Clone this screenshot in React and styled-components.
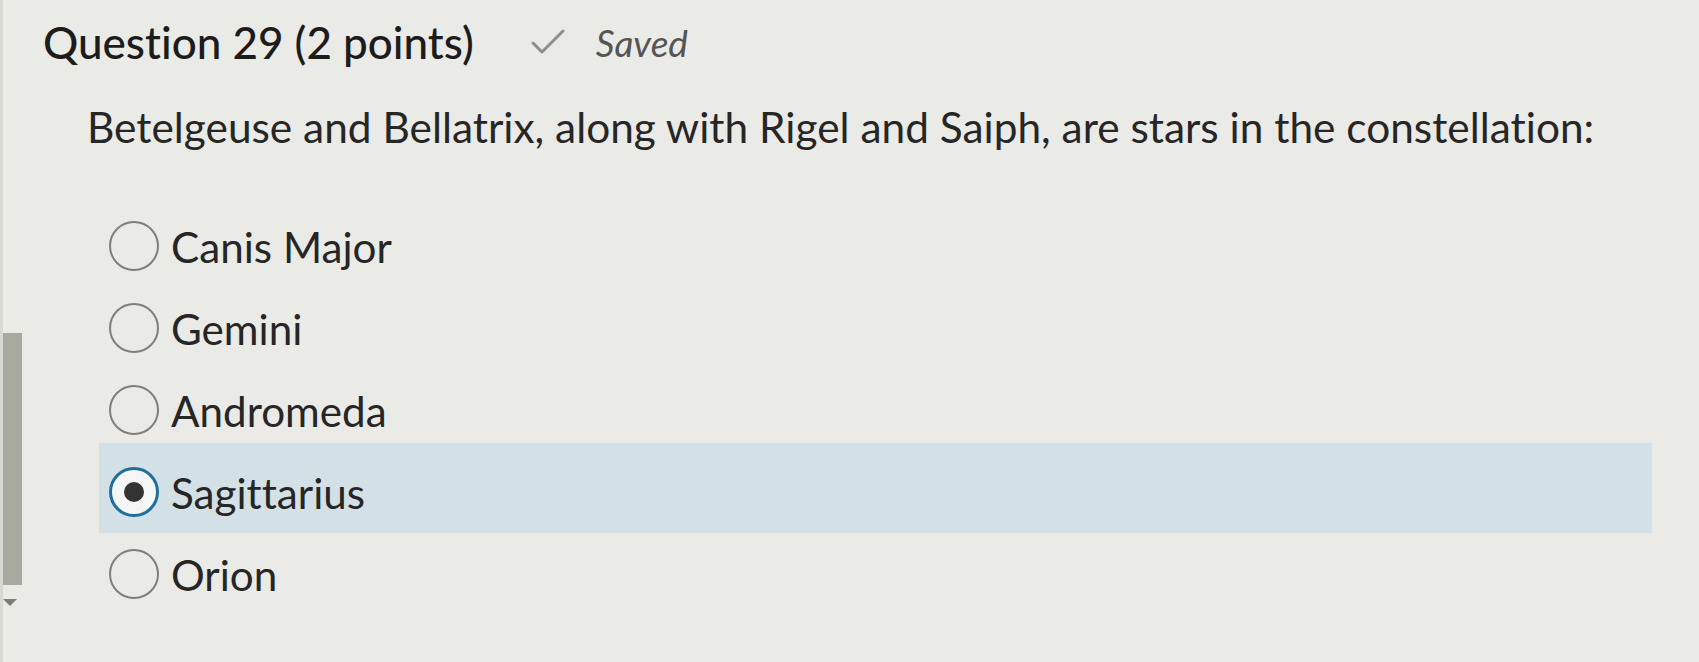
import React from "react"
import styled, { createGlobalStyle } from "styled-components"

const Global = createGlobalStyle`
  html, body {
    margin: 0;
    padding: 0;
    background: #eaeae6;
  }
  body {
    font-family: Lato, "Noto Sans", sans-serif;
    font-variant-ligatures: no-common-ligatures;
    color: #2b2b2b;
  }
`

const options = [
  { label: "Canis Major" },
  { label: "Gemini" },
  { label: "Andromeda" },
  { label: "Sagittarius", selected: true },
  { label: "Orion" }
]

export default function App() {
  return (
    <>
      <Global />
      <Page>
        <ScrollStrip>
          <Thumb />
          <Arrow />
        </ScrollStrip>
        <Content>
          <Header>
            <Title>Question 29 (2 points)</Title>
            <SavedBox>
              <svg width="36" height="28" viewBox="0 0 36 28">
                <path d="M3 15 L12 24 L33 3" fill="none" stroke="#8d8d8a" strokeWidth="3" strokeLinecap="round" strokeLinejoin="round" />
              </svg>
              <Saved>Saved</Saved>
            </SavedBox>
          </Header>
          <Prompt>Betelgeuse and Bellatrix, along with Rigel and Saiph, are stars in the constellation:</Prompt>
          <OptionList>
            {options.map(o => (
              <Row key={o.label} selected={o.selected}>
                <Radio selected={o.selected}>{o.selected && <Dot />}</Radio>
                <Label>{o.label}</Label>
              </Row>
            ))}
          </OptionList>
        </Content>
      </Page>
    </>
  )
}

const Page = styled.div`
  display: flex;
  width: 1699px;
  height: 662px;
  overflow: hidden;
`

const ScrollStrip = styled.div`
  width: 22px;
  display: flex;
  flex-direction: column;
  padding-top: 333px;
  border-left: 3px solid #d9d9d4;
  box-sizing: border-box;
`

const Thumb = styled.div`
  width: 19px;
  height: 252px;
  background: #a9a9a0;
`

const Arrow = styled.div`
  margin: 14px 0 0 0;
  width: 0;
  height: 0;
  border-left: 7px solid transparent;
  border-right: 7px solid transparent;
  border-top: 7px solid #7d7d78;
`

const Content = styled.div`
  flex: 1;
  display: flex;
  flex-direction: column;
  padding: 16px 47px 0 21px;
`

const Header = styled.div`
  display: flex;
  align-items: center;
`

const Title = styled.div`
  font-size: 44px;
  font-weight: 500;
  line-height: 52px;
  color: #1c1c1c;
`

const SavedBox = styled.div`
  display: flex;
  align-items: center;
  gap: 30px;
  margin-left: 56px;
`

const Saved = styled.span`
  font-style: italic;
  font-size: 37px;
  color: #555;
`

const Prompt = styled.div`
  font-size: 42.4px;
  line-height: 50px;
  margin: 34px 0 0 44px;
  color: #262626;
`

const OptionList = styled.div`
  display: flex;
  flex-direction: column;
  margin: 53px 0 0 56px;
`

const Row = styled.div`
  display: flex;
  align-items: center;
  gap: 12px;
  height: 82px;
  padding: ${p => (p.selected ? "8px 0 0 10px" : "0 0 0 10px")};
  margin-top: ${p => (p.selected ? "-8px" : "0")};
  background: ${p => (p.selected ? "#d3e0e6" : "transparent")};
`

const Radio = styled.div`
  width: 50px;
  height: 50px;
  box-sizing: border-box;
  border-radius: 50%;
  border: ${p => (p.selected ? "3.5px solid #1f6e9c" : "2px solid #7f7f7c")};
  background: ${p => (p.selected ? "#f4f6f6" : "transparent")};
  display: flex;
  align-items: center;
  justify-content: center;
`

const Dot = styled.div`
  width: 20px;
  height: 20px;
  border-radius: 50%;
  background: #333;
`

const Label = styled.span`
  font-size: 42.2px;
  color: #262626;
`
